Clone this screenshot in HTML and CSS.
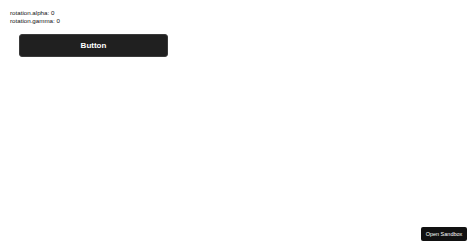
FILE: index.html
```html
<!DOCTYPE html>
<html>
<head>
<meta charset="utf-8">
<link rel="stylesheet" href="styles.css">
</head>
<body>
<div class="app">
  <div class="readout">
    <div class="line">rotation.alpha: 0</div>
    <div class="line">rotation.gamma: 0</div>
  </div>
  <button class="btn">Button</button>
</div>
<a class="sandbox">Open Sandbox</a>
</body>
</html>
```
FILE: styles.css
```css
html, body {
  margin: 0;
  padding: 0;
  background: #ffffff;
  height: 100%;
}
body {
  font-family: "Liberation Sans", Arial, sans-serif;
  position: relative;
}
.app {
  padding: 9px 0 0 10px;
}
.readout {
  font-size: 6.2px;
  line-height: 7.5px;
  color: #111;
}
.btn {
  display: flex;
  align-items: center;
  justify-content: center;
  margin: 10px 0 0 9px;
  width: 149px;
  height: 23px;
  background: #202020;
  color: #fff;
  border: 1px solid #3a3a3a;
  border-radius: 3px;
  font-family: "Liberation Sans", Arial, sans-serif;
  font-weight: bold;
  font-size: 8px;
  padding: 0;
}
.sandbox {
  position: absolute;
  right: 7px;
  bottom: 7px;
  width: 46px;
  height: 14px;
  display: flex;
  align-items: center;
  justify-content: center;
  background: #111;
  color: #fff;
  font-size: 5.5px;
  border-radius: 2px;
}
```
